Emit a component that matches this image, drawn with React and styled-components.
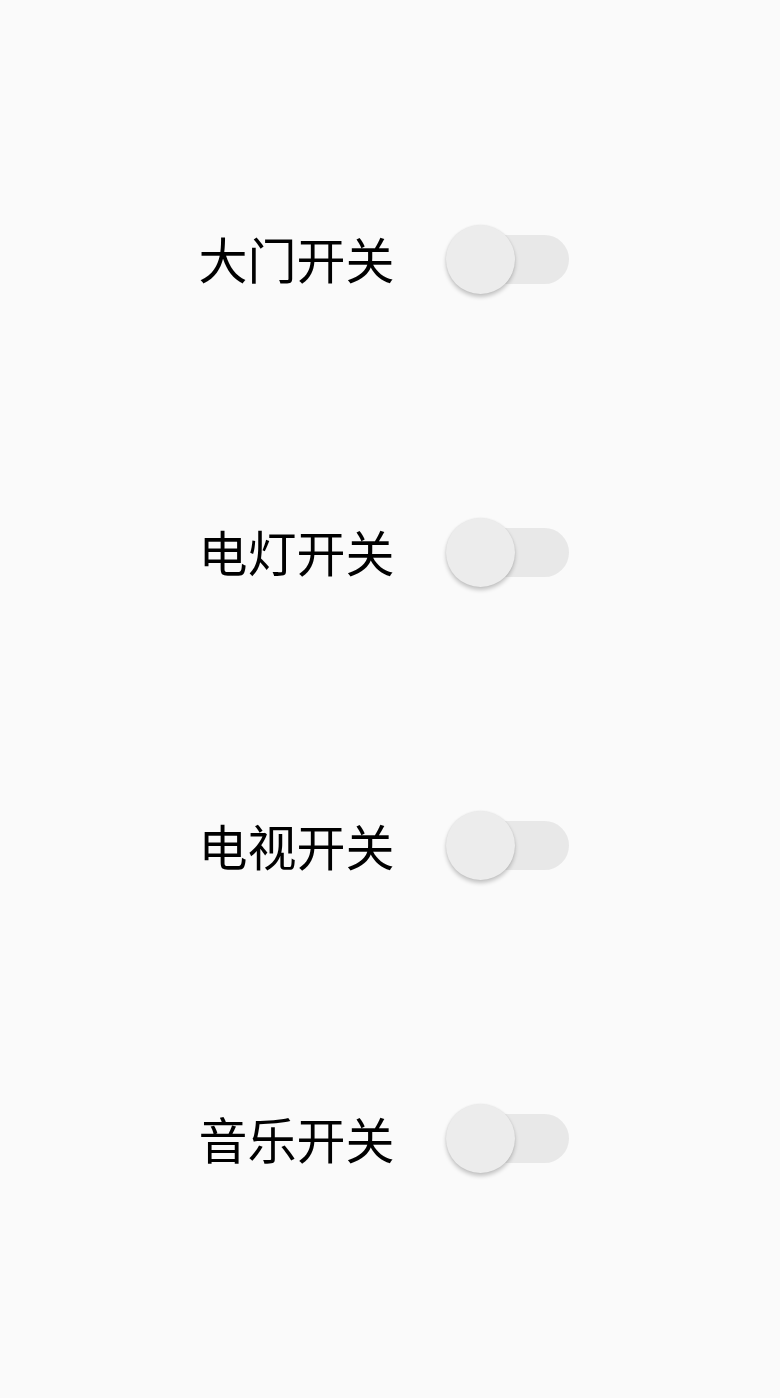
import React from 'react';
import styled, { createGlobalStyle } from 'styled-components';

const GlobalStyle = createGlobalStyle`
  html, body {
    margin: 0;
    padding: 0;
    background: #fafafa;
  }
`;

const Screen = styled.div`
  height: 1398px;
  display: flex;
  flex-direction: column;
  justify-content: space-evenly;
  background: #fafafa;
  font-family: "Noto Sans CJK SC", "Noto Sans", sans-serif;
`;

const Row = styled.div`
  display: flex;
  align-items: center;
  justify-content: center;
  height: 68px;
  padding-right: 13px;
`;

const Label = styled.span`
  font-size: 49px;
  line-height: 1;
  color: #000;
  margin-right: 51px;
  margin-bottom: 3px;
`;

const SwitchBox = styled.button`
  position: relative;
  width: 123px;
  height: 69px;
  padding: 0;
  border: none;
  background: transparent;
  cursor: pointer;
`;

const Track = styled.span`
  position: absolute;
  left: 6px;
  right: 0;
  top: 10px;
  height: 49px;
  border-radius: 25px;
  background: ${p => (p.on ? '#a7d4cf' : '#e8e8e8')};
`;

const Thumb = styled.span`
  position: absolute;
  top: 0;
  left: ${p => (p.on ? '54px' : '0')};
  width: 69px;
  height: 69px;
  border-radius: 50%;
  background: ${p => (p.on ? '#26a69a' : '#ececec')};
  box-shadow: 0 3px 4px rgba(0, 0, 0, 0.22), 0 0 2px rgba(0, 0, 0, 0.08);
  transition: left 0.15s;
`;

const Toggle = ({ label }) => {
  const [on, setOn] = React.useState(false);
  return (
    <Row>
      <Label>{label}</Label>
      <SwitchBox onClick={() => setOn(v => !v)}>
        <Track on={on} />
        <Thumb on={on} />
      </SwitchBox>
    </Row>
  );
};

const switches = ['大门开关', '电灯开关', '电视开关', '音乐开关'];

export default function App() {
  return (
    <>
      <GlobalStyle />
      <Screen>
        {switches.map(s => (
          <Toggle key={s} label={s} />
        ))}
      </Screen>
    </>
  );
}
